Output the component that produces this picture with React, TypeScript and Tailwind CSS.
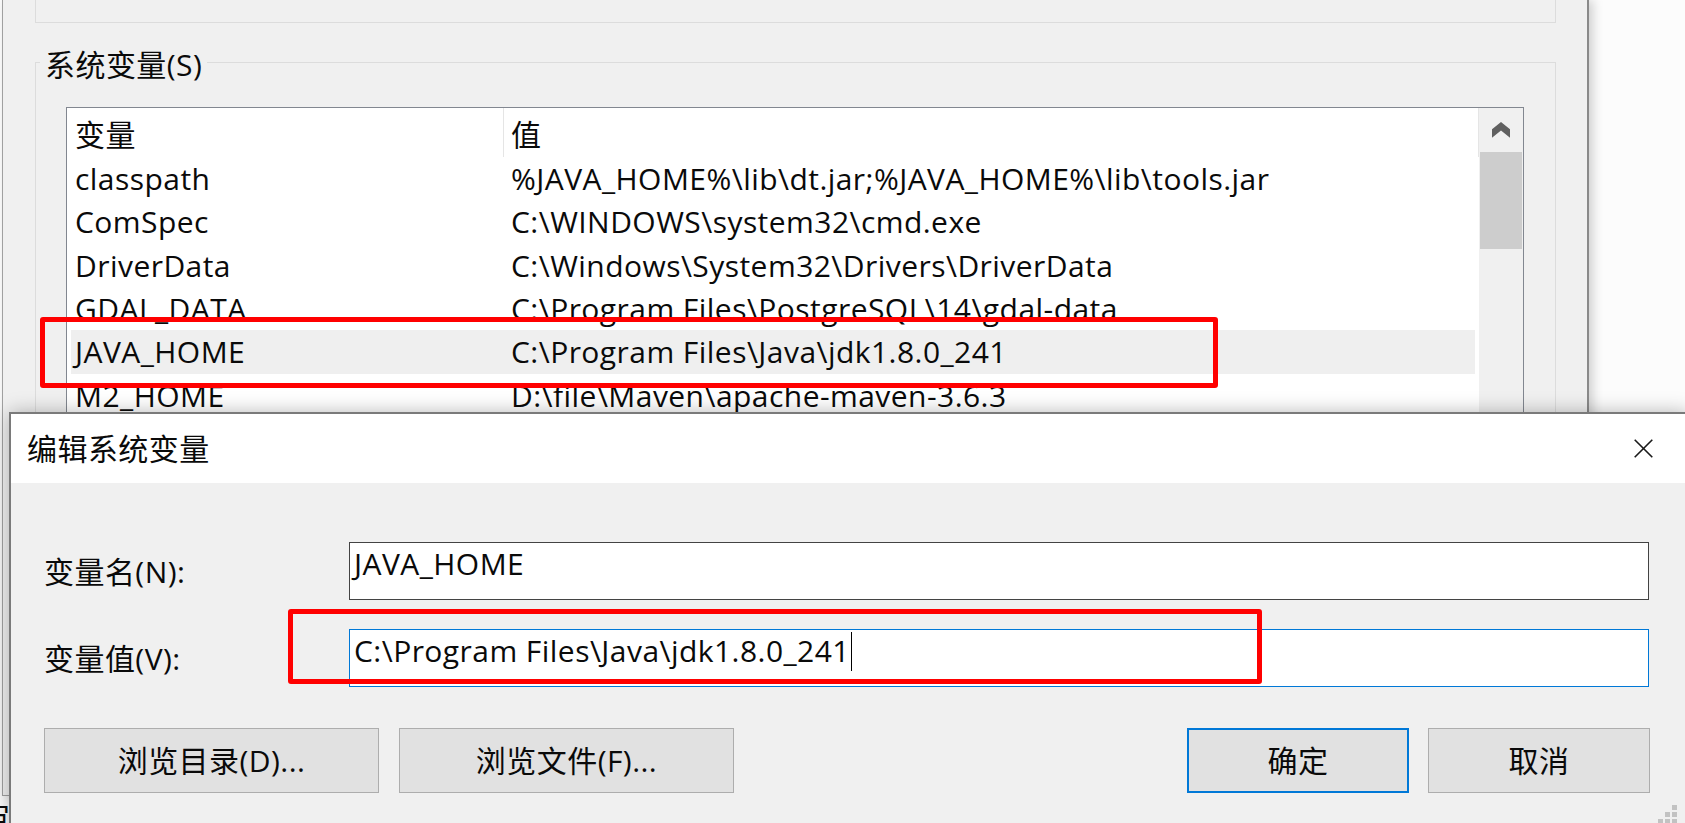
import React from "react";

const rows: [string, string][] = [
  ["classpath", "%JAVA_HOME%\\lib\\dt.jar;%JAVA_HOME%\\lib\\tools.jar"],
  ["ComSpec", "C:\\WINDOWS\\system32\\cmd.exe"],
  ["DriverData", "C:\\Windows\\System32\\Drivers\\DriverData"],
  ["GDAL_DATA", "C:\\Program Files\\PostgreSQL\\14\\gdal-data"],
  ["JAVA_HOME", "C:\\Program Files\\Java\\jdk1.8.0_241"],
  ["M2_HOME", "D:\\file\\Maven\\apache-maven-3.6.3"],
];

export default function App() {
  return (
    <div className="relative w-[1685px] h-[823px] overflow-hidden bg-[#fcfcfc] font-['Open_Sans','Noto_Sans_CJK_SC',sans-serif] text-[30px] leading-[41px] tracking-[0.45px] text-[#0a0a0a]">
      {/* background window: environment variables */}
      <div className="ml-[2px] w-[1587px] h-[796px] overflow-hidden bg-[#f0f0f0] border-l border-b border-[#a0a0a0] border-r-2 border-r-[#8a8a8a] shadow-[4px_0_10px_rgba(0,0,0,0.18)]">
        {/* user variables group (bottom part) */}
        <div className="ml-[32px] w-[1521px] h-[23px] border-x border-b border-[#dcdcdc]" />
        {/* system variables group */}
        <div className="relative mt-[39px] ml-[32px] w-[1521px] h-[800px] border-x border-t border-[#dcdcdc] pt-[44px] pl-[30px]">
          <span className="absolute left-[4px] top-[-19px] px-[5px] bg-[#f0f0f0] whitespace-nowrap">系统变量(S)</span>
          <div className="w-[1458px] h-[700px] border border-[#828790] bg-white flex">
            <div className="w-[1412px] flex flex-col">
              <div className="flex h-[49px] shrink-0">
                <div className="w-[437px] h-full pl-[8px] pt-[4px] border-r border-[#e5e5e5] flex items-center">变量</div>
                <div className="flex-1 h-full pl-[7px] pt-[4px] border-r border-[#e5e5e5] flex items-center">值</div>
              </div>
              {rows.map(([name, value]) => (
                <div
                  key={name}
                  className={
                    name === "JAVA_HOME"
                      ? "ml-[4px] w-[1404px] h-[43.33px] shrink-0 flex leading-[43.33px] whitespace-nowrap bg-[#efefef]"
                      : "ml-[4px] w-[1404px] h-[43.33px] shrink-0 flex leading-[43.33px] whitespace-nowrap"
                  }
                >
                  <div className="w-[433px] pl-[4px] overflow-hidden">{name}</div>
                  <div className="flex-1 pl-[7px] overflow-hidden">{value}</div>
                </div>
              ))}
            </div>
            <div className="w-[44px] bg-[#f0f0f0] flex flex-col">
              <div className="h-[44px] flex items-center justify-center">
                <svg width="18" height="16" viewBox="0 0 18 16">
                  <polygon points="9,0 18,7.3 18,15.7 9,8.4 0,15.7 0,7.3" fill="#606060" />
                </svg>
              </div>
              <div className="h-[97px] mx-[1px] bg-[#cdcdcd]" />
            </div>
          </div>
        </div>
      </div>
      {/* strip of another window under the background one */}
      <div className="h-[27px] overflow-hidden">
        <span className="ml-[-20px]">宙</span>
      </div>

      {/* red annotation around the JAVA_HOME row */}
      <div className="absolute left-[40px] top-[317px] w-[1178px] h-[71px] border-[5px] border-[#ff0000] rounded-[3px]" />

      {/* edit dialog */}
      <div className="absolute left-[9px] top-[412px] w-[1680px] h-[460px] border-2 border-[#7a7a7a] bg-[#f0f0f0] shadow-[0_0_18px_rgba(0,0,0,0.28)]">
        <div className="h-[69px] bg-white flex items-center justify-between pl-[16px] pr-[34px]">
          <span>编辑系统变量</span>
          <svg width="19" height="19" viewBox="0 0 19 19">
            <path d="M0.7 0.7 L18.3 18.3 M18.3 0.7 L0.7 18.3" stroke="#1a1a1a" strokeWidth="1.6" fill="none" />
          </svg>
        </div>
        <div className="pl-[33px] pt-[59px]">
          <div className="flex items-center h-[58px]">
            <div className="w-[305px]">变量名(N):</div>
            <div className="w-[1300px] h-[58px] border border-[#434343] bg-white pl-[4px] whitespace-nowrap">JAVA_HOME</div>
          </div>
          <div className="flex items-center h-[58px] mt-[29px]">
            <div className="w-[305px]">变量值(V):</div>
            <div className="w-[1300px] h-[58px] border border-[#0078d7] bg-white pl-[4px] whitespace-nowrap flex items-start">
              <span>C:\Program Files\Java\jdk1.8.0_241</span>
              <span className="ml-[1px] mt-[2px] w-[1px] h-[39px] bg-black" />
            </div>
          </div>
          <div className="flex mt-[41px]">
            <div className="w-[335px] h-[65px] bg-[#e1e1e1] border border-[#adadad] flex items-center justify-center">浏览目录(D)...</div>
            <div className="ml-[20px] w-[335px] h-[65px] bg-[#e1e1e1] border border-[#adadad] flex items-center justify-center">浏览文件(F)...</div>
            <div className="ml-[453px] w-[222px] h-[65px] bg-[#e1e1e1] border-2 border-[#0078d7] flex items-center justify-center">确定</div>
            <div className="ml-[19px] w-[222px] h-[65px] bg-[#e1e1e1] border border-[#adadad] flex items-center justify-center">取消</div>
          </div>
        </div>
        <svg className="absolute left-[1647px] top-[391px]" width="20" height="20" viewBox="0 0 20 20">
          <rect x="14" y="0" width="5" height="5" fill="#c2c2c2" />
          <rect x="7" y="7" width="5" height="5" fill="#c2c2c2" />
          <rect x="14" y="7" width="5" height="5" fill="#c2c2c2" />
          <rect x="0" y="14" width="5" height="5" fill="#c2c2c2" />
          <rect x="7" y="14" width="5" height="5" fill="#c2c2c2" />
          <rect x="14" y="14" width="5" height="5" fill="#c2c2c2" />
        </svg>
      </div>

      {/* red annotation around the value field */}
      <div className="absolute left-[288px] top-[609px] w-[974px] h-[75px] border-[5px] border-[#ff0000] rounded-[3px]" />
    </div>
  );
}
